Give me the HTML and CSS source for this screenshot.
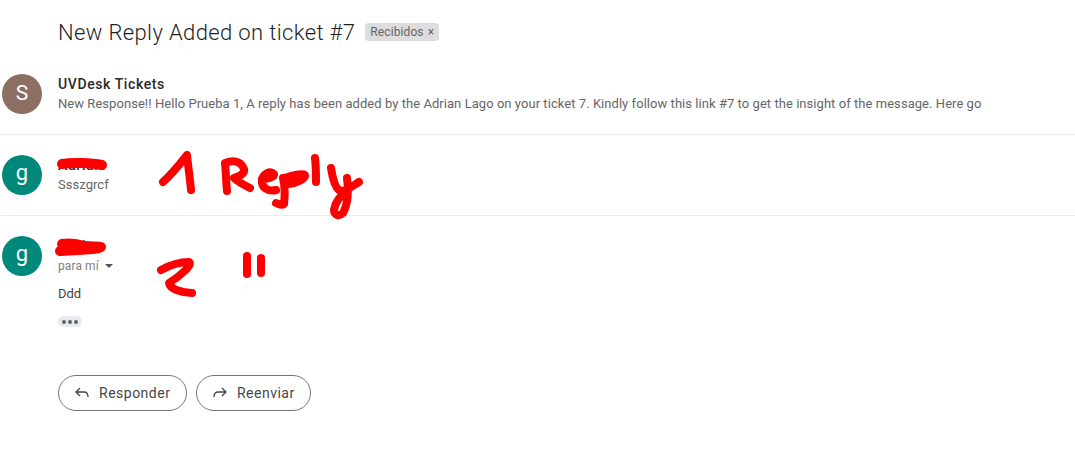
FILE: index.html
```html
<!DOCTYPE html>
<html lang="es">
<head>
  <meta charset="UTF-8" />
  <title>New Reply Added on ticket #7</title>
  <link rel="stylesheet" href="styles.css">
</head>
<body>
  <main class="thread">
    <header class="subject">
      <h1>New Reply Added on ticket #7</h1>
      <span class="label">Recibidos <span class="label-x">×</span></span>
    </header>

    <section class="msg msg-first">
      <div class="avatar avatar-brown">S</div>
      <div class="msg-body">
        <div class="sender">UVDesk Tickets</div>
        <div class="snippet">New Response!! Hello Prueba 1, A reply has been added by the Adrian Lago on your ticket 7. Kindly follow this link #7 to get the insight of the message. Here go</div>
      </div>
    </section>

    <section class="msg msg-second">
      <div class="avatar avatar-green">g</div>
      <div class="msg-body">
        <div class="sender">Adrian</div>
        <div class="snippet">Ssszgrcf</div>
      </div>
    </section>

    <section class="msg msg-open">
      <div class="avatar avatar-green">g</div>
      <div class="msg-body">
        <div class="sender">Adrian</div>
        <div class="to">para mí <span class="caret"></span></div>
        <div class="text">Ddd</div>
        <div class="dots"><i></i><i></i><i></i></div>
      </div>
    </section>

    <div class="actions">
      <button class="action">
        <svg viewBox="0 0 16 16" width="16" height="16"><path d="M6 3 2 7l4 4M2.5 7H10c2.4 0 4 1.6 4 5"/></svg>
        Responder
      </button>
      <button class="action">
        <svg viewBox="0 0 16 16" width="16" height="16"><path d="M10 3l4 4-4 4M13.5 7H6c-2.4 0-4 1.6-4 5"/></svg>
        Reenviar
      </button>
    </div>
  </main>

  <!-- marker scribbles on top of the screenshot -->
  <svg class="scribbles" viewBox="0 0 1075 476" width="1075" height="476">
    <path class="thick" d="M62 164C72 162 92 163 102 165"/>
    <path class="thick" d="M62 244C70 243 78 244 84 246C92 247 98 246 101 247"/>
    <path class="thick" d="M60 251C72 250 88 250 99 248"/>
    <path d="M163 182C172 174 180 164 187 155C188 166 190 178 191 190"/>
    <path d="M227 191C226 182 226 172 225 163C233 160 240 161 243 167C247 173 240 176 234 178C238 182 244 185 250 188"/>
    <path d="M262 179C267 179 275 177 274 174C270 170 263 174 262 180C261 187 267 192 276 190"/>
    <path d="M283 178C285 187 285 196 284 204C282 206 279 204 276 203M285 178C292 175 302 173 305 175C306 179 296 183 289 184"/>
    <path d="M315 158C316 166 316 175 316 182"/>
    <path d="M331 168C333 180 336 191 342 191C348 190 354 185 359 182M347 178C349 190 348 204 343 213C339 217 334 215 334 210C335 203 340 196 347 192"/>
    <path d="M161 270C170 265 180 262 189 262C193 265 180 276 169 283C170 289 182 293 192 293"/>
    <path d="M247 256L247 274"/>
    <path d="M261 258L261 273"/>
  </svg>
</body>
</html>
```

FILE: styles.css
```css
body {
  margin: 0;
  background: #fff;
  font-family: Roboto, "Liberation Sans", sans-serif;
  color: #222;
  position: relative;
  height: 476px;
  overflow: hidden;
}

.subject {
  display: flex;
  align-items: center;
  gap: 10px;
  height: 64px;
  padding-left: 58px;
}

h1 {
  margin: 0;
  font-size: 22px;
  font-weight: 300;
  color: #1f1f1f;
  letter-spacing: 0.37px;
}

.label {
  background: #ddd;
  color: #666;
  font-size: 12px;
  line-height: 18px;
  padding: 0 5px;
  border-radius: 4px;
  letter-spacing: 0.1px;
}

.label-x {
  margin-left: 1px;
}

.msg {
  display: flex;
  gap: 16px;
  padding: 10px 0 0 2px;
}

.msg-first {
  height: 60px;
  border-bottom: 1px solid #ebebeb;
}

.msg-second {
  padding-top: 20px;
  height: 60px;
  border-bottom: 1px solid #ebebeb;
}

.msg-open {
  padding-top: 20px;
}

.avatar {
  width: 40px;
  height: 40px;
  border-radius: 50%;
  color: #fff;
  font-size: 21px;
  line-height: 38px;
  text-align: center;
  flex-shrink: 0;
}

.avatar-brown {
  background: #8d6e63;
}

.avatar-green {
  background: #00897b;
  line-height: 35px;
  font-size: 22px;
}

.sender {
  font-size: 14px;
  font-weight: 500;
  line-height: 20px;
  color: #2a2a2a;
  letter-spacing: 0.6px;
}

.snippet {
  font-size: 13px;
  line-height: 17px;
  color: #666;
  letter-spacing: 0.05px;
  white-space: nowrap;
  padding-top: 1px;
}

.to {
  font-size: 12px;
  line-height: 20px;
  color: #808080;
  letter-spacing: 0.1px;
}

.caret {
  display: inline-block;
  margin: 0 0 2px 3px;
  border: 4px solid transparent;
  border-top: 4px solid #555;
  border-bottom: 0;
  vertical-align: middle;
}

.text {
  font-size: 13px;
  line-height: 16px;
  color: #444;
  margin-top: 10px;
}

.dots {
  display: flex;
  align-items: center;
  justify-content: center;
  gap: 2px;
  width: 24px;
  height: 11px;
  margin-top: 14px;
  background: #e8eaed;
  border-radius: 6px;
}

.dots i {
  width: 4px;
  height: 4px;
  border-radius: 50%;
  background: #5f6368;
}

.actions {
  display: flex;
  gap: 9px;
  padding: 48px 0 0 58px;
}

.action {
  display: flex;
  align-items: center;
  gap: 9px;
  height: 36px;
  padding: 0 15.5px 0 15px;
  background: #fff;
  border: 1px solid #747775;
  border-radius: 18px;
  font-family: Roboto, sans-serif;
  font-size: 14px;
  color: #444746;
  letter-spacing: 0.5px;
}

.action svg {
  fill: none;
  stroke: #444746;
  stroke-width: 1.3;
}

.scribbles {
  position: absolute;
  left: 0;
  top: 0;
  fill: none;
  stroke: #f00;
  stroke-width: 8;
  stroke-linecap: round;
  stroke-linejoin: round;
  pointer-events: none;
}

.scribbles .thick {
  stroke-width: 10;
}
```
